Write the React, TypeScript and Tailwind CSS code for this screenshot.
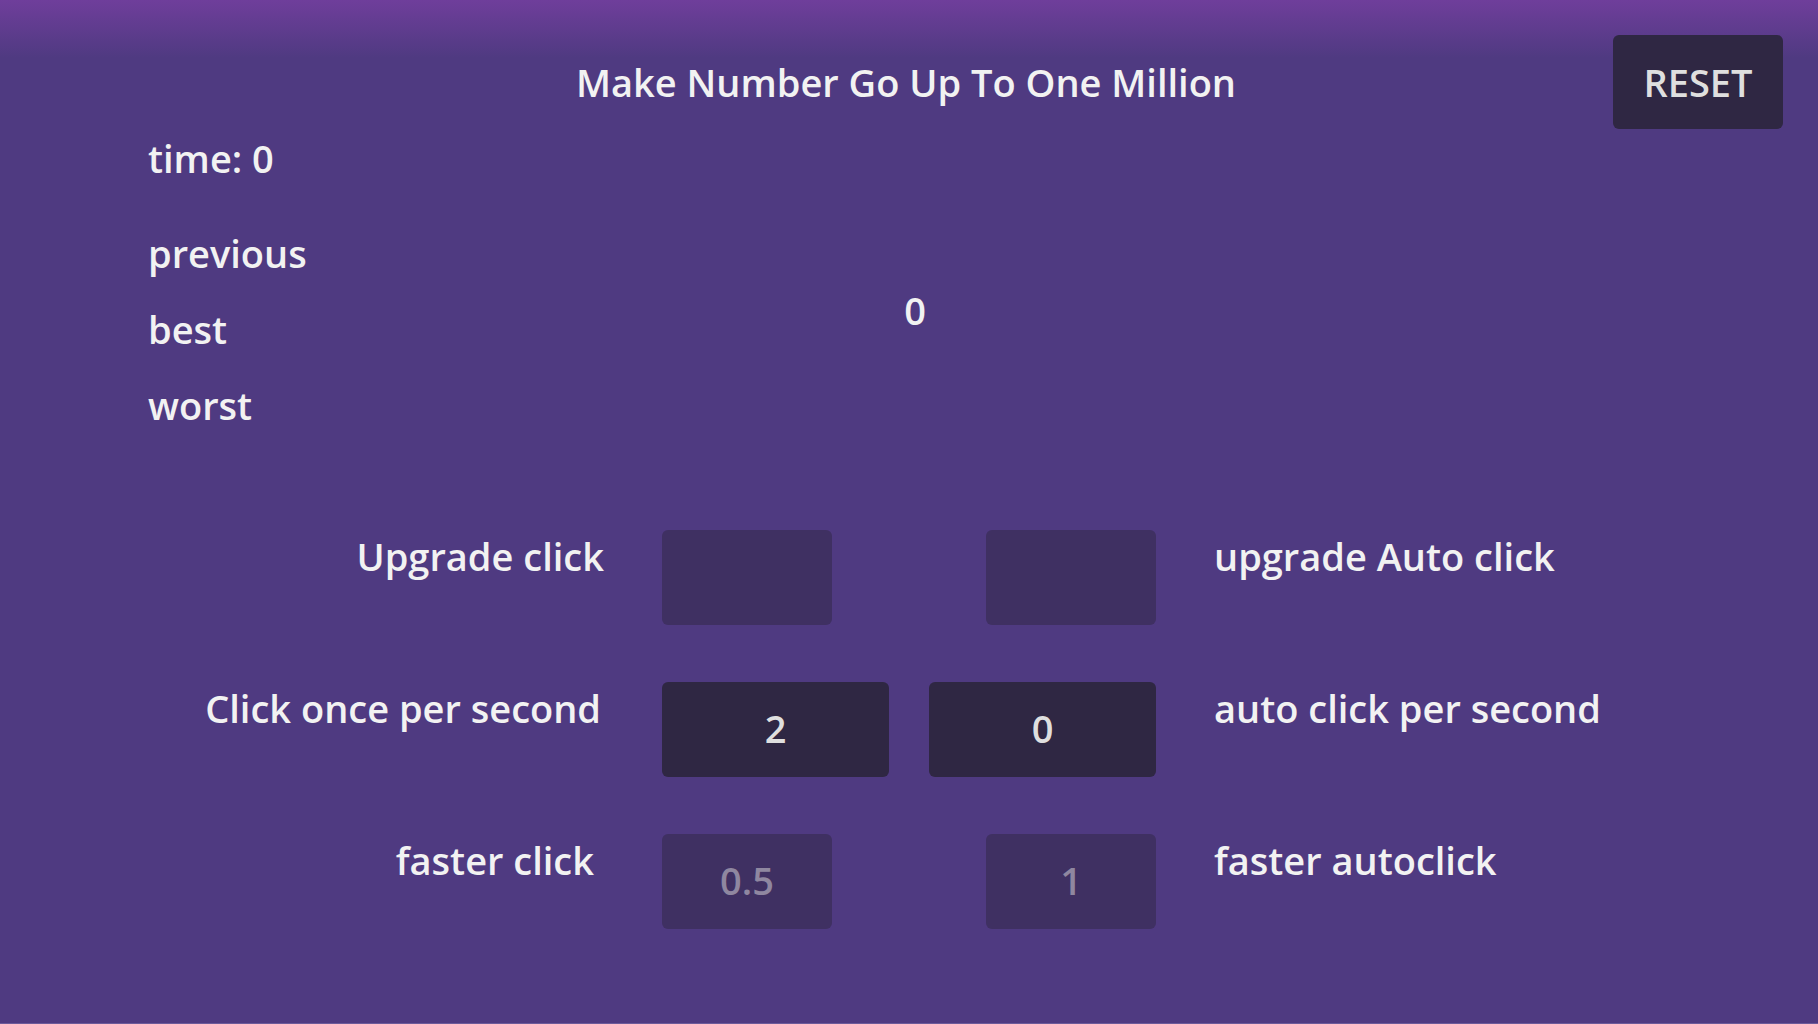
import React from "react"

const font = { fontFamily: '"Open Sans", "Noto Sans", sans-serif' }

type Box = { text?: string; dark?: boolean; wide?: boolean }

function Slot({ text, dark, wide }: Box) {
  return (
    <div
      className={`h-[95px] pb-[3px] rounded-[6px] flex items-center justify-center text-[38px] ${
        wide ? "w-[227px]" : "w-[170px]"
      } ${dark ? "bg-[#2f2743] text-[#dfdfdf]" : "bg-[#3f3062] text-[#8f87a0]"}`}
    >
      {text}
    </div>
  )
}

const rows = [
  { left: "Upgrade click", right: "upgrade Auto click", pad: "pr-0", a: {}, b: {} },
  {
    left: "Click once per second",
    right: "auto click per second",
    pad: "pr-[3px]",
    a: { text: "2", dark: true, wide: true },
    b: { text: "0", dark: true, wide: true },
  },
  {
    left: "faster click",
    right: "faster autoclick",
    pad: "pr-[10px]",
    a: { text: "0.5" },
    b: { text: "1" },
  },
]

export default function App() {
  return (
    <div
      className="w-full h-[1024px] overflow-hidden bg-[linear-gradient(to_bottom,#6f3e9b_0px,#4f3a81_58px,#4f3a81_100%)] border-b border-[#6b5a9a] text-[#f2f2f2] font-semibold"
      style={font}
    >
      {/* header */}
      <div className="grid grid-cols-[1fr_auto_1fr] items-center pt-[35px]">
        <div />
        <h1 className="text-[38px] leading-none -translate-x-[3px]">Make Number Go Up To One Million</h1>
        <div className="flex justify-end pr-[35px]">
          <button className="w-[170px] h-[94px] rounded-[6px] bg-[#2f2743] text-[#dfdfdf] text-[38px]">
            RESET
          </button>
        </div>
      </div>

      <div className="pl-[148px] mt-[3px] text-[38px] leading-[52px]">time: 0</div>

      <div className="flex mt-[43px] pl-[148px] text-[38px] leading-[52px]">
        <div className="w-[610px] flex flex-col gap-[24px]">
          <div>previous</div>
          <div>best</div>
          <div>worst</div>
        </div>
        <div className="w-[314px] text-center pt-[57px]">0</div>
      </div>

      {/* upgrades */}
      <div className="mt-[99px] flex flex-col gap-[57px] text-[38px] leading-[52px]">
        {rows.map((r) => (
          <div key={r.left} className="flex h-[95px]">
            <div className={`w-[604px] text-right ${r.pad}`}>{r.left}</div>
            <div className="ml-[58px] w-[494px] flex justify-between">
              <Slot {...r.a} />
              <Slot {...r.b} />
            </div>
            <div className="ml-[58px]">{r.right}</div>
          </div>
        ))}
      </div>
    </div>
  )
}
